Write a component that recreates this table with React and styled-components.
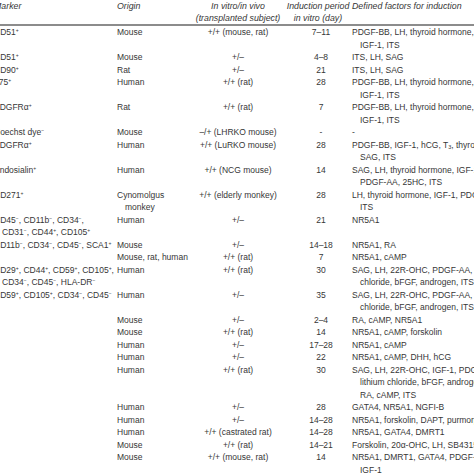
import React from "react";
import styled, { createGlobalStyle } from "styled-components";

const Global = createGlobalStyle`
  html, body {
    margin: 0;
    padding: 0;
    background: #fff;
    overflow: hidden;
  }
  body {
    font-family: "Liberation Sans", Arial, sans-serif;
    color: #363636;
  }
`;

const Page = styled.div`
  width: 474px;
  height: 474px;
  overflow: hidden;
`;

const Table = styled.div`
  margin-left: -6px;
  font-size: 8.5px;
`;

const cols = "123px 75px 92px 68px auto";

const HeadRow = styled.div`
  display: grid;
  grid-template-columns: ${cols};
  font-style: italic;
  font-size: 8.8px;
  line-height: 12px;
  border-bottom: 2px solid #8c8c8c;
`;

const Row = styled.div`
  display: grid;
  grid-template-columns: ${cols};
  line-height: 12.5px;
`;

const Cell = styled.div`
  white-space: nowrap;
  display: flex;
  flex-direction: column;
  align-items: ${(p) => (p.$center ? "center" : "flex-start")};
  padding-left: ${(p) => p.$pad || 0}px;
`;

const Line = styled.span`
  padding-left: ${(p) => (p.$indent ? 8 : 0)}px;
`;

const Sup = styled.sup`
  font-size: 5px;
  line-height: 0;
  vertical-align: 3px;
`;

const Sub = styled.sub`
  font-size: 5.5px;
  line-height: 0;
  vertical-align: -1px;
`;

const m = (name, sign) => (
  <>
    {name}
    <Sup>{sign}</Sup>
  </>
);

const P = "+";
const N = "−";

const rows = [
  { mk: [m("CD51", P)], or: ["Mouse"], iv: "+/+ (mouse, rat)", pd: "7–11", df: ["PDGF-BB, LH, thyroid hormone,", "IGF-1, ITS"] },
  { mk: [m("CD51", P)], or: ["Mouse"], iv: "+/–", pd: "4–8", df: ["ITS, LH, SAG"] },
  { mk: [m("CD90", P)], or: ["Rat"], iv: "+/–", pd: "21", df: ["ITS, LH, SAG"] },
  { mk: [m("p75", P)], or: ["Human"], iv: "+/+ (rat)", pd: "28", df: ["PDGF-BB, LH, thyroid hormone,", "IGF-1, ITS"] },
  { mk: [m("PDGFRα", P)], or: ["Rat"], iv: "+/+ (rat)", pd: "7", df: ["PDGF-BB, LH, thyroid hormone,", "IGF-1, ITS"] },
  { mk: [m("Hoechst dye", N)], or: ["Mouse"], iv: "–/+ (LHRKO mouse)", pd: "-", df: ["-"] },
  {
    mk: [m("PDGFRα", P)],
    or: ["Human"],
    iv: "+/+ (LuRKO mouse)",
    pd: "28",
    df: [
      <>
        PDGF-BB, IGF-1, hCG, T<Sub>3</Sub>, thyroid hormone,
      </>,
      "SAG, ITS",
    ],
  },
  { mk: [m("Endosialin", P)], or: ["Human"], iv: "+/+ (NCG mouse)", pd: "14", df: ["SAG, LH, thyroid hormone, IGF-1,", "PDGF-AA, 25HC, ITS"] },
  { mk: [m("CD271", P)], or: ["Cynomolgus", "monkey"], iv: "+/+ (elderly monkey)", pd: "28", df: ["LH, thyroid hormone, IGF-1, PDGF-BB,", "ITS"] },
  {
    mk: [
      <>
        {m("CD45", N)}, {m("CD11b", N)}, {m("CD34", N)},
      </>,
      <>
        {m("CD31", N)}, {m("CD44", P)}, {m("CD105", P)}
      </>,
    ],
    or: ["Human"],
    iv: "+/–",
    pd: "21",
    df: ["NR5A1"],
  },
  {
    mk: [
      <>
        {m("CD11b", N)}, {m("CD34", N)}, {m("CD45", N)}, {m("SCA1", P)}
      </>,
    ],
    or: ["Mouse"],
    iv: "+/–",
    pd: "14–18",
    df: ["NR5A1, RA"],
  },
  { mk: [""], or: ["Mouse, rat, human"], iv: "+/+ (rat)", pd: "7", df: ["NR5A1, cAMP"] },
  {
    mk: [
      <>
        {m("CD29", P)}, {m("CD44", P)}, {m("CD59", P)}, {m("CD105", P)},
      </>,
      <>
        {m("CD34", N)}, {m("CD45", N)}, {m("HLA-DR", N)}
      </>,
    ],
    or: ["Human"],
    iv: "+/+ (rat)",
    pd: "30",
    df: ["SAG, LH, 22R-OHC, PDGF-AA, lithium", "chloride, bFGF, androgen, ITS"],
  },
  {
    mk: [
      <>
        {m("CD59", P)}, {m("CD105", P)}, {m("CD34", N)}, {m("CD45", N)}
      </>,
    ],
    or: ["Human"],
    iv: "+/–",
    pd: "35",
    df: ["SAG, LH, 22R-OHC, PDGF-AA, lithium", "chloride, bFGF, androgen, ITS"],
  },
  { mk: [""], or: ["Mouse"], iv: "+/–", pd: "2–4", df: ["RA, cAMP, NR5A1"] },
  { mk: [""], or: ["Mouse"], iv: "+/+ (rat)", pd: "14", df: ["NR5A1, cAMP, forskolin"] },
  { mk: [""], or: ["Human"], iv: "+/–", pd: "17–28", df: ["NR5A1, cAMP"] },
  { mk: [""], or: ["Human"], iv: "+/–", pd: "22", df: ["NR5A1, cAMP, DHH, hCG"] },
  {
    mk: [""],
    or: ["Human"],
    iv: "+/+ (rat)",
    pd: "30",
    df: ["SAG, LH, 22R-OHC, IGF-1, PDGF-AA,", "lithium chloride, bFGF, androgen,", "RA, cAMP, ITS"],
  },
  { mk: [""], or: ["Human"], iv: "+/–", pd: "28", df: ["GATA4, NR5A1, NGFI-B"] },
  { mk: [""], or: ["Human"], iv: "+/–", pd: "14–28", df: ["NR5A1, forskolin, DAPT, purmorphamine"] },
  { mk: [""], or: ["Human"], iv: "+/+ (castrated rat)", pd: "14–28", df: ["NR5A1, GATA4, DMRT1"] },
  { mk: [""], or: ["Mouse"], iv: "+/+ (rat)", pd: "14–21", df: ["Forskolin, 20α-OHC, LH, SB431542"] },
  { mk: [""], or: ["Mouse"], iv: "+/+ (mouse, rat)", pd: "14", df: ["NR5A1, DMRT1, GATA4, PDGF-BB,", "IGF-1"] },
];

function Lines({ items }) {
  return items.map((t, i) => (
    <Line key={i} $indent={i > 0}>
      {t === "" ? "\u00a0" : t}
    </Line>
  ));
}

export default function App() {
  return (
    <Page>
      <Global />
      <Table>
        <HeadRow>
          <Cell>Marker</Cell>
          <Cell>Origin</Cell>
          <Cell $center>
            <span>In vitro/in vivo</span>
            <span>(transplanted subject)</span>
          </Cell>
          <Cell $center>
            <span>Induction period</span>
            <span>in vitro (day)</span>
          </Cell>
          <Cell>Defined factors for induction</Cell>
        </HeadRow>
        {rows.map((r, i) => (
          <Row key={i}>
            <Cell>
              <Lines items={r.mk} />
            </Cell>
            <Cell>
              <Lines items={r.or} />
            </Cell>
            <Cell $center>{r.iv}</Cell>
            <Cell $center $pad={6}>
              {r.pd}
            </Cell>
            <Cell>
              <Lines items={r.df} />
            </Cell>
          </Row>
        ))}
      </Table>
    </Page>
  );
}
